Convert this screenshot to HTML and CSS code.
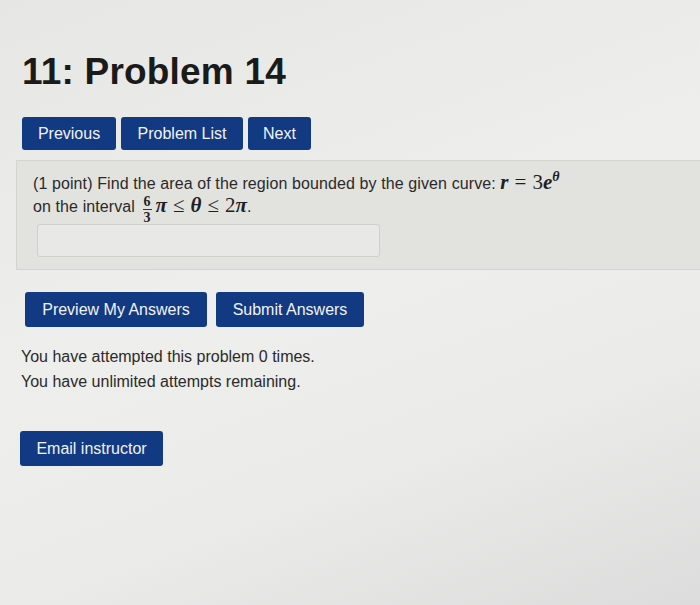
FILE: index.html
```html
<!DOCTYPE html>
<html>
<head>
<meta charset="utf-8">
<link rel="stylesheet" href="styles.css">
</head>
<body>
<div class="page">
  <h1 class="title">11: Problem 14</h1>
  <div class="nav">
    <button class="btn nav-prev">Previous</button>
    <button class="btn nav-list">Problem List</button>
    <button class="btn nav-next">Next</button>
  </div>
  <div class="problem">
    <div class="ptext">(1 point) Find the area of the region bounded by the given curve: <span class="math"><i>r</i><span class="rel">=</span>3<i>e</i><sup><i>θ</i></sup></span></div>
    <div class="ptext line2">on the interval <span class="math"><span class="frac"><span class="num">6</span><span class="den">3</span></span><i>π</i><span class="rel">≤</span><i>θ</i><span class="rel">≤</span>2<i>π</i></span>.</div>
    <div class="answer"></div>
  </div>
  <div class="actions">
    <button class="btn big">Preview My Answers</button>
    <button class="btn big">Submit Answers</button>
  </div>
  <div class="attempts">
    <div>You have attempted this problem 0 times.</div>
    <div>You have unlimited attempts remaining.</div>
  </div>
  <button class="btn big email">Email instructor</button>
</div>
</body>
</html>
```
FILE: styles.css
```css
html, body { margin: 0; padding: 0; }
body {
  width: 700px;
  height: 605px;
  overflow: hidden;
  background: linear-gradient(160deg, #e6e6e4 0%, #eeeeec 45%, #ebebea 70%, #dcdcdc 100%);
  font-family: "Liberation Sans", Arial, sans-serif;
  color: #222;
}
.page { padding: 0 0 0 16px; }
.title {
  margin: 0;
  padding: 51px 0 0 6px;
  font-size: 37px;
  font-weight: bold;
  line-height: 42px;
  color: #1a1a1a;
  letter-spacing: 0.2px;
}
.nav {
  display: flex;
  gap: 5px;
  margin: 24px 0 0 6px;
}
.btn {
  font-family: "Liberation Sans", Arial, sans-serif;
  background: #123a83;
  color: #f2f2f2;
  border: none;
  border-radius: 3px;
  font-size: 16px;
  height: 33px;
  padding: 0 15px;
  cursor: pointer;
}
.nav-prev { width: 94px; }
.nav-list { width: 122px; }
.nav-next { width: 63px; }
.problem {
  margin-top: 10px;
  background: #e2e2df;
  border: 1px solid #d4d4d0;
  border-right: none;
  height: 110px;
  padding: 10px 0 0 16px;
  box-sizing: border-box;
}
.ptext {
  font-size: 16px;
  line-height: 22px;
  height: 22px;
  color: #2a2a2a;
  letter-spacing: 0.1px;
}
.line2 { margin-top: 1px; }
.math {
  font-family: "Liberation Serif", "Times New Roman", serif;
  font-size: 21px;
  color: #1f1f1f;
  letter-spacing: 0;
}
.math i { font-weight: bold; }
.rel { margin: 0 6px; font-size: 21px; }
.math sup { font-size: 14px; vertical-align: 8px; line-height: 0; }
.frac {
  display: inline-block;
  vertical-align: -10px;
  font-size: 14px;
  font-weight: bold;
  line-height: 13px;
  margin: 0 4px 0 3px;
  text-align: center;
}
.frac .num { display: block; border-bottom: 1px solid #333; padding: 0 1px 1px; }
.frac .den { display: block; padding-top: 1px; }
.answer {
  margin: 8px 0 0 4px;
  width: 343px;
  height: 33px;
  box-sizing: border-box;
  border: 1px solid #cfcfcc;
  border-radius: 3px;
  background: #e8e8e6;
}
.actions {
  display: flex;
  gap: 9px;
  margin: 22px 0 0 9px;
}
.big { height: 35px; padding: 0 15px; }
.actions .big:first-child { width: 182px; }
.actions .big:last-child { width: 148px; }
.attempts {
  margin: 17px 0 0 5px;
  font-size: 16px;
  line-height: 25px;
  color: #2a2a2a;
}
.email {
  display: block;
  margin: 37px 0 0 4px;
  width: 143px;
}
```
